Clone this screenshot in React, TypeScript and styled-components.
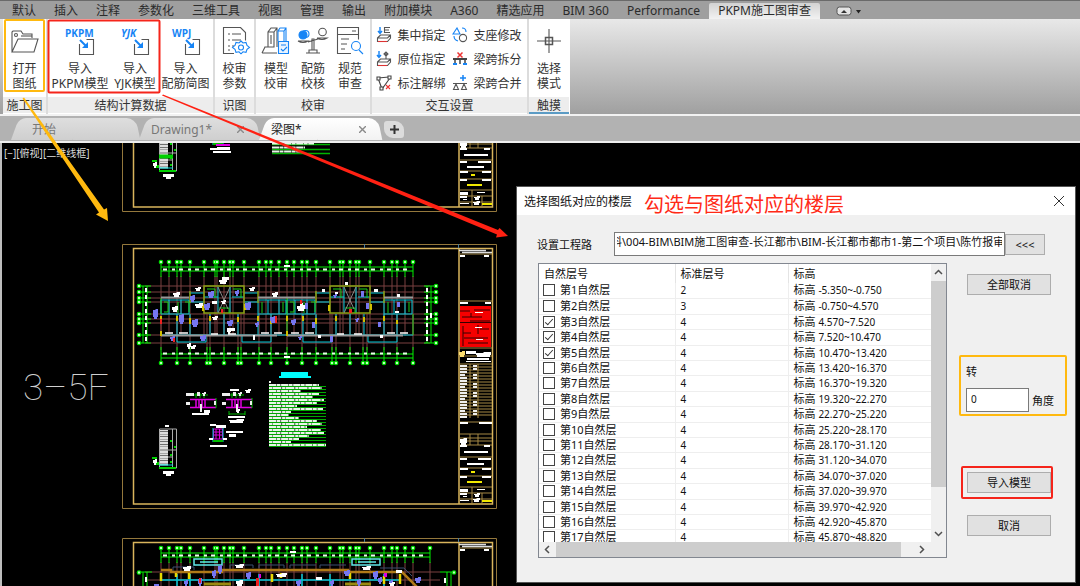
import React from 'react';
import styled, { createGlobalStyle, css } from 'styled-components';

const GlobalStyle = createGlobalStyle`
  *, *::before, *::after { box-sizing: border-box; }
  body { margin: 0; background: #000; }
  button, input { font: inherit; color: inherit; margin: 0; padding: 0; }
  button { border: 0; background: none; }
`;

const Page = styled.div`
  position: relative;
  display: flex;
  flex-direction: column;
  min-height: 100vh;
  overflow: hidden;
  font: 12px/15px 'Noto Sans', 'Noto Sans CJK SC', sans-serif;
  color: #333;
`;

/* ---------- ribbon tabs ---------- */
const MenuBar = styled.nav`
  display: flex;
  align-items: flex-end;
  height: 19px;
  padding-left: 3px;
  background: #9f9f9f;
  border-top: 1px solid #6a6a6a;
  white-space: nowrap;
`;
const MenuTab = styled.button<{ $active?: boolean }>`
  height: 16px;
  padding: 0 9px;
  line-height: 16px;
  color: #2b2b2b;
  ${p => p.$active && css`
    background: linear-gradient(#d2d2d2, #f2f2f2);
    border-radius: 2px 2px 0 0;
  `}
`;
const MenuToggle = styled.button`
  display: flex;
  align-items: center;
  height: 17px;
  margin-left: 16px;
`;

/* ---------- ribbon panels ---------- */
const Ribbon = styled.div`
  display: flex;
  height: 97px;
  padding-left: 3px;
  background: linear-gradient(#e8e8e8, #a0a0a0);
  border-bottom: 2px solid #f2f2f2;
`;
const Panel = styled.section<{ $w: number }>`
  display: flex;
  flex-direction: column;
  flex: none;
  width: ${p => p.$w}px;
  background: #fff;
  border-right: 2px solid #dcdcdc;
  &:last-child { border-right: 1px solid #fff; }
`;
const PanelBody = styled.div`
  display: flex;
  flex: 1;
  justify-content: center;
  padding-top: 8px;
`;
const PanelLabel = styled.div<{ $active?: boolean }>`
  height: 17px;
  line-height: 17px;
  text-align: center;
  background: #ededed;
  border-bottom: ${p => (p.$active ? '2px solid #5b9bc4' : '1px solid #fff')};
`;
const BigTool = styled.button<{ $w: number }>`
  display: flex;
  flex-direction: column;
  align-items: center;
  flex: none;
  width: ${p => p.$w}px;
  height: 66px;
  white-space: nowrap;
  svg { flex: none; margin-bottom: 4px; }
`;
const SmallTools = styled.div`
  display: grid;
  grid-template-columns: 76px 72px;
  grid-auto-rows: 24px;
  margin-top: -4px;
`;
const SmallTool = styled.button`
  display: flex;
  align-items: center;
  gap: 6px;
  white-space: nowrap;
`;

/* ---------- document tabs ---------- */
const DocTabs = styled.div`
  display: flex;
  align-items: flex-end;
  height: 27px;
  padding: 0 0 1px 14px;
  background: #b2b2b2;
  border-bottom: 2px solid #eee;
`;
const DocTab = styled.div<{ $w: number; $active?: boolean }>`
  position: relative;
  z-index: 0;
  display: flex;
  align-items: center;
  justify-content: space-between;
  flex: none;
  width: ${p => p.$w}px;
  height: 22px;
  margin-right: 4px;
  padding: 0 14px 0 9px;
  color: ${p => (p.$active ? '#222' : '#777')};
  &:first-child { padding-left: 18px; }
  &::before, &::after {
    content: '';
    position: absolute;
    z-index: -1;
    top: 0;
    bottom: 0;
    background: ${p => (p.$active ? 'linear-gradient(#fff, #f2f2f2)' : 'linear-gradient(#dedede, #cfcfcf)')};
  }
  &::before { left: 1px; right: 50%; transform: skewX(-20deg); border-radius: 7px 0 0 0; }
  &::after { right: 0; left: 45%; transform: skewX(12deg); border-radius: 0 9px 0 0; }
`;
const DocTitle = styled.button`
  white-space: nowrap;
`;
const DocClose = styled.button`
  display: flex;
  color: #8a8a8a;
`;
const NewTab = styled.button`
  display: flex;
  align-items: center;
  justify-content: center;
  width: 20px;
  height: 17px;
  margin-bottom: 2px;
  background: #dcdcdc;
  border-radius: 3px 9px 3px 9px;
`;

/* ---------- drawing area ---------- */
const Canvas = styled.main`
  position: relative;
  flex: 1;
  background: #000;
  border-left: 2px solid #bdbdbd;
  overflow: hidden;
`;
const Drawing = styled.svg`
  display: block;
`;
const Annotations = styled.svg`
  position: absolute;
  left: 0;
  top: 0;
  pointer-events: none;
`;

/* ---------- dialog ---------- */
const Dialog = styled.section`
  position: absolute;
  top: 43px;
  right: 4px;
  width: 560px;
  height: 397px;
  background: #f0f0f0;
  border: 1px solid #555;
  color: #111;
  font-size: 11px;
`;
const TitleBar = styled.header`
  display: flex;
  align-items: center;
  height: 28px;
  padding: 0 11px 0 7px;
  background: #fff;
`;
const DialogTitle = styled.h1`
  margin: 0;
  font-size: 12px;
  font-weight: 400;
`;
const Callout = styled.span`
  flex: 1;
  padding: 7px 0 0 12px;
  font-size: 20px;
  line-height: 24px;
  color: #ff2a17;
`;
const CloseButton = styled.button`
  display: flex;
`;
const PathRow = styled.div`
  display: flex;
  align-items: center;
  padding: 17px 0 0 20px;
  label { width: 77px; }
`;
const TextBox = styled.input`
  height: 24px;
  background: #fff;
  border: 1px solid #7a7a7a;
  border-radius: 0;
  outline: 0;
`;
const PathInput = styled(TextBox)`
  width: 391px;
  padding: 0 2px 6px;
  text-indent: -6px;
`;
const AngleInput = styled(TextBox)`
  width: 63px;
  padding: 0 4px 2px;
  font-size: 10px;
`;
const PushButton = styled.button<{ $w: number }>`
  display: block;
  width: ${p => p.$w}px;
  height: 21px;
  line-height: 19px;
  background: #e1e1e1;
  border: 1px solid #adadad;
`;
const DialogBody = styled.div`
  display: flex;
  gap: 12px;
  padding: 7px 0 0 21px;
`;
const ListBox = styled.div`
  display: grid;
  grid-template: 278px 15px / 1fr 15px;
  flex: none;
  width: 409px;
  border: 1px solid #828790;
  background: #fff;
`;
const ListView = styled.div`
  overflow: hidden;
`;
const FloorTable = styled.table`
  width: 100%;
  border-collapse: collapse;
  table-layout: fixed;
  line-height: 14px;
  th, td {
    padding: 0 0 0 5px;
    text-align: left;
    font-weight: 400;
    white-space: nowrap;
    border-right: 1px solid #eee;
  }
  th { height: 19px; border-color: #e4e4e4; }
  td { border-bottom: 1px solid #eee; }
  th:last-child, td:last-child { border-right: 0; }
  td:first-child { padding-left: 4px; }
  tbody tr { height: 15px; }
  tbody tr:nth-child(5n + 2), tbody tr:nth-child(5n + 4) { height: 16px; }
`;
const Num = styled.span`
  font-size: 10px;
`;
const FloorLabel = styled.label`
  display: flex;
  align-items: center;
  gap: 5px;
`;
const Check = styled.input`
  appearance: none;
  position: relative;
  width: 12px;
  height: 12px;
  background: #fff;
  border: 1px solid #444;
  &:checked::after {
    content: '';
    position: absolute;
    left: 3px;
    top: 0;
    width: 4px;
    height: 8px;
    border: solid #333;
    border-width: 0 1px 1px 0;
    transform: rotate(42deg);
  }
`;
const VScroll = styled.div`
  display: grid;
  grid-template-rows: 17px 206px 1fr 17px;
  justify-items: center;
  align-items: center;
  background: #f0f0f0;
`;
const HScroll = styled.div`
  display: grid;
  grid-column: 1 / 3;
  grid-template-columns: 17px 345px 1fr 17px;
  align-items: center;
  justify-items: center;
  padding-right: 16px;
  background: #f0f0f0;
`;
const Thumb = styled.div`
  width: 100%;
  height: 100%;
  background: #cdcdcd;
`;
const Side = styled.div`
  display: flex;
  flex-direction: column;
  width: 108px;
  padding-top: 11px;
`;
const SideSlot = styled.div<{ $top: number }>`
  margin-top: ${p => p.$top}px;
  padding-left: 8px;
`;
const AngleBox = styled.div`
  margin-top: 60px;
  height: 61px;
  padding: 7px 0 0 5px;
  border: 2px solid #ffb90f;
  border-radius: 2px;
`;
const AngleRow = styled.div`
  display: flex;
  align-items: center;
  gap: 3px;
  margin-top: 9px;
`;
const ImportBox = styled.div`
  margin: 50px 0 0 2px;
  width: 92px;
  height: 33px;
  padding: 4px 0 0 4px;
  border: 2px solid #f5251b;
  border-radius: 2px;
`;

/* ---------- icons ---------- */
const Glyph = ({ w, h, children }: { w: number; h: number; children: React.ReactNode }) => (
  <svg width={w} height={h} viewBox={`0 0 ${w} ${h}`} fill="none" stroke="#555" strokeWidth="1.1" aria-hidden="true">
    {children}
  </svg>
);
const BLUE = '#1684f5';

const FolderIcon = () => (
  <Glyph w={32} h={30}>
    <path d="M3 25V5l1-1h8l2 3h9v4M3 25l6-13h20l-4 13H3Z" />
    <circle cx="7" cy="8" r="1.500" />
    <path d="M12 9h11" />
  </Glyph>
);
const ImportIcon = ({ name }: { name: string }) => (
  <Glyph w={32} h={30}>
    <text x={name.length > 3 ? 1 : 2} y="10" fill={BLUE} stroke="none" fontSize="10" fontWeight="700" fontStyle={name === 'YJK' ? 'italic' : 'normal'} fontFamily="'Open Sans', sans-serif">{name}</text>
    <path d="M15.500 17v10.500h14V12.500h-7" />
    <path d="M16 13l6 6" stroke={BLUE} strokeWidth="2" />
    <path d="M24 21h-6l6-6z" fill={BLUE} stroke="none" />
  </Glyph>
);
const ParamsIcon = () => (
  <Glyph w={32} h={30}>
    <path d="M15 26.500H4.500V.500h17l5 5v8M9 7h2m2 0h9M9 13h2m2 0h9M9 19h2m2 0h2M9 23h2" />
    <g stroke={BLUE}>
      <path d="m22 14 2 2 3-.6 1 3 2.500 2-2.500 2-1 3-3-.6-2 2-2-2-3 .6-1-3-2.500-2 2.500-2 1-3 3 .6z" />
      <circle cx="22" cy="20.500" r="2.500" />
    </g>
  </Glyph>
);
const ModelIcon = () => (
  <Glyph w={32} h={30}>
    <path d="M2 26h15M2 26l3-6h3V5l3-4h6v19M8 5h6v15H5M14 5l3-4M11 8v9M5 20l-3 6" />
    <path d="M18 14V4l2-3h6v13M18 4h6l2-3M24 4v10" stroke={BLUE} />
    <path d="M18.500 14.500h10v12h-10zM21 18h5m-5 4 2 2 4-4" stroke={BLUE} fill="#e8f3ff" />
  </Glyph>
);
const BalanceIcon = () => (
  <Glyph w={32} h={30}>
    <circle cx="6" cy="8" r="4" fill={BLUE} stroke={BLUE} />
    <circle cx="8.500" cy="7" r="3.500" stroke={BLUE} />
    <circle cx="25.500" cy="5" r="3.800" />
    <path d="M1 14q5 3 10 0H1M20 11q5 3 10 0H20M11 15l10-3M15 12h2v11h-2zM12 23h8v3h-8zM9 26h14" />
  </Glyph>
);
const SpecIcon = () => (
  <Glyph w={32} h={30}>
    <path d="M17 26.500H3.500V.500h21v12M3.500 7.500h21M18 4h4M7 12h8M7 17h6M7 22h4" />
    <circle cx="22" cy="19" r="4.500" stroke={BLUE} />
    <path d="m25 23 4 4" stroke={BLUE} />
  </Glyph>
);
const TargetIcon = () => (
  <Glyph w={32} h={30}>
    <path d="M16 2v24M4 14h24" />
    <path d="M12.500 10.500h7v7h-7z" strokeWidth="1.500" />
  </Glyph>
);
const smallIcons: Record<string, React.ReactNode> = {
  集中指定: <><path d="M1.500 11l3-3h10v3l-3 3.500h-10zM1.500 11h10l3-3" stroke="#555" /><path d="M2 14.500h9" stroke="#d33" /><path d="M4 0v6M2 4l2 2.500L6 4" stroke={BLUE} strokeWidth="1.400" /><path d="M8.500 0v6M9 .500h5M9 3h4M9 5.500h5" /></>,
  支座修改: <><path d="M5 1l3 6H1z" stroke={BLUE} /><circle cx="11" cy="11" r="3.600" /><path d="M10 1q4 0 4 4M2 9q0 4 4 5" stroke={BLUE} /></>,
  原位指定: <><path d="M1.500 11l3-3h10v3l-3 3.500h-10zM1.500 11h10l3-3" stroke="#555" /><path d="M2 14.500h9" stroke="#d33" /><path d="M3 0v6M1 4l2 2.500L5 4" stroke={BLUE} strokeWidth="1.400" /><path d="M10 8V1M8 3l2-2 2 2-2 2z" /></>,
  梁跨拆分: <><path d="M1 8h14" stroke="#444" strokeWidth="2" /><path d="M3 8v4M13 8v4M8 8v5" stroke="#444" strokeWidth="1.500" /><path d="M5.500 1.500l5 5M10.500 1.500l-5 5" stroke="#e33" strokeWidth="1.500" /><path d="M1 13h4M11 13h4" stroke={BLUE} strokeWidth="2" /></>,
  标注解绑: <><path d="M2 3l11-1M2 3l4 11L14 3" stroke="#444" /><path d="M1 2h3v3H1zM12 1h3v3h-3zM4 12h3v3H4z" fill="#fff" stroke="#444" /><path d="M10 10l4 4M14 10l-4 4" stroke="#e33" /></>,
  梁跨合并: <><path d="M1 8.500h14M4 9l-2.500 5.500h5zM12 9l-2.500 5.500h5z" /><path d="M11 0v6M8 3h6" stroke={BLUE} strokeWidth="1.500" /></>,
};
const Chevron = ({ d }: { d: string }) => (
  <svg width="9" height="9" viewBox="0 0 9 9" fill="none" stroke="#505050" strokeWidth="1.500" aria-hidden="true"><path d={d} /></svg>
);
const Cross = ({ size, color = 'currentColor', width = 1 }: { size: number; color?: string; width?: number }) => (
  <svg width={size} height={size} viewBox="0 0 10 10" stroke={color} strokeWidth={width} aria-hidden="true"><path d="M0 0l10 10M10 0L0 10" /></svg>
);

/* ---------- CAD drawing ---------- */
const GREEN = '#00f000';
const CYAN = '#00c8d8';
const BROWN = '#7a4040';
const GRID_TOP = [161, 169, 177, 181, 190, 204, 215, 217, 224, 230, 233, 244, 259, 266, 271, 279, 287, 294, 302, 307, 316, 330, 340, 343, 350, 356, 359, 370, 384, 392, 397, 405, 413];
const GRID_BOTTOM = [161, 177, 190, 207, 210, 224, 238, 241, 259, 271, 287, 302, 316, 332, 336, 350, 363, 367, 384, 397, 413];
const GRID_SIDE = [286, 292, 298, 302, 314, 319, 323, 335, 343];

const vlines = (xs: number[], y1: number, y2: number) => xs.map(x => `M${x} ${y1}V${y2}`).join('');
const hlines = (ys: number[], x1: number, x2: number) => ys.map(y => `M${x1} ${y}H${x2}`).join('');

const Bubble = ({ x, y }: { x: number; y: number }) => (
  <g><circle cx={x} cy={y} r="2.300" fill="#0d0" /><rect x={x - 1} y={y - 1} width="2" height="2" fill="#bfb" /></g>
);

type Blob = [number, number, number, number];
/* each annotation mark is a solid strip with a narrower ragged one beneath it */
const Blobs = ({ items, fill }: { items: Blob[]; fill: string }) => (
  <g fill={fill}>
    {items.map(([x, y, w, h], i) => (h > 3 && w > 3
      ? <path key={i} d={`M${x} ${y + 1}h${w / 2}v-1h${w / 2}v${h - 2}h-1v2h-${w - 2}v-2h-1z`} />
      : <rect key={i} x={x} y={y} width={w} height={h} />))}
  </g>
);

const HousingUnit = ({ x }: { x: number }) => (
  <g transform={`translate(${x} 0)`} fill="none">
    <path d="M0 300H28V314H0zM28 293H43M29 302H43M83 293H97M83 302H97M97 300H125V314H97zM8 300V314M20 300V314M107 300V314M118 300V314M57 287V312M69 287V313M43 297H57M71 297H83" stroke={CYAN} />
    <path d="M16 314V335M29 314V335M49 314V335M63 314V335M77 314V335M97 314V335M110 314V335M16 335V342H45V335M81 335V342H110V335M0 335H126" stroke={CYAN} />
    <path d="M43 286H83V313H43zM29 291V303M97 291V303" stroke="#86a010" strokeWidth="1.500" />
    <path d="M0 298V314M3 302h4v10H3M17 302v11M24 302h4v10M101 302v11M122 302v10M46 289h8v9M72 289h8v9M58 308h10v5M126 314V335" stroke="#18d018" />
    <path d="M0 297.500H28M97 297.500H126M0 335.500H116" stroke="#999" strokeWidth="2" />
    <path d="M57 313L69 287M57 287l10 22" stroke="#888" />
    <path d="M0 316v5M16 316v5M29 318v6M49 316v5M77 317v5M97 316v5M110 320v4M0 336v-5M42 305v6M84 304v6" stroke="#d0c000" strokeWidth="2" />
    <path d="M4 333h8M18 333h9M50 334h7M67 334h8M100 333h8M113 333h8" stroke="#fff" strokeWidth="1.500" />
  </g>
);

const FloorPlan = () => (
  <g>
    <path d={vlines(GRID_TOP, 276, 336) + vlines(GRID_BOTTOM, 314, 350) + hlines(GRID_SIDE, 145, 430)} stroke={BROWN} />
    <path d={vlines(GRID_TOP, 263, 277) + vlines(GRID_BOTTOM, 347, 362) + hlines([267, 271, 354, 358], 161, 413) + hlines(GRID_SIDE, 140, 151) + hlines(GRID_SIDE, 424, 436) + vlines([143, 147, 427, 431], 286, 343)} stroke={GREEN} />
    <path d="M163 269.500H412M163 353.500H412" stroke="#e8ffe8" strokeWidth="2" strokeDasharray="4 5 3 4" />
    <path d="M146 288V342M427 288V342" stroke="#fff" strokeWidth="2" strokeDasharray="4 3" />
    <Blobs fill="#fff" items={[[284, 265, 6, 2], [284, 356, 6, 2], [430, 313, 2, 5]]} />
    {GRID_TOP.map(x => <Bubble key={x} x={x} y={262} />)}
    {GRID_BOTTOM.map(x => <Bubble key={x} x={x} y={363} />)}
    {GRID_SIDE.map(y => <g key={y}><Bubble x={139} y={y} /><Bubble x={436} y={y} /></g>)}
    <HousingUnit x={161} />
    <HousingUnit x={287} />
    <Blobs fill="#7676f0" items={[[153, 309, 5, 10], [179, 314, 5, 10], [192, 319, 6, 8], [204, 303, 6, 7], [190, 295, 5, 7], [208, 291, 6, 7], [235, 290, 4, 6], [245, 302, 6, 8], [200, 335, 6, 6], [227, 320, 6, 6], [270, 316, 7, 7], [291, 319, 5, 6], [255, 322, 4, 5], [170, 336, 5, 5], [298, 336, 4, 4], [312, 322, 3, 6], [330, 336, 3, 6], [355, 318, 4, 4], [378, 322, 3, 5], [366, 303, 3, 6], [333, 294, 4, 4], [361, 291, 3, 6], [397, 302, 3, 5], [305, 303, 3, 6]]} />
    <Blobs fill="#fff" items={[[219, 279, 8, 5], [222, 277, 7, 3], [173, 292, 7, 5], [195, 287, 6, 4], [249, 287, 6, 4], [172, 306, 6, 6], [195, 303, 8, 5], [212, 316, 6, 4], [227, 328, 8, 3], [227, 330, 4, 4], [187, 343, 4, 6], [190, 345, 6, 4], [272, 292, 6, 5], [297, 305, 8, 6], [221, 300, 5, 4], [212, 301, 5, 3], [253, 335, 2, 5], [345, 282, 3, 3], [322, 289, 3, 3], [374, 289, 4, 3], [335, 292, 3, 2], [397, 294, 3, 3], [395, 311, 4, 2], [318, 335, 3, 3], [380, 335, 3, 3], [300, 303, 3, 4]]} />
    <Blobs fill="#f02020" items={[[160, 319, 2, 5], [275, 316, 2, 7], [173, 338, 2, 4], [221, 309, 2, 4], [349, 309, 3, 4], [300, 300, 2, 4]]} />
  </g>
);

const ROOF_GRID = [...GRID_TOP, 430];
const RoofPlan = () => (
  <g>
    <path d={vlines(ROOF_GRID, 562, 586) + hlines([572, 580], 145, 440)} stroke={BROWN} />
    <path d={vlines(ROOF_GRID, 549, 563) + hlines([553, 557], 161, 430) + 'M140 572H152M143 572V586M147 572V586M440 572H454M447 572V586M451 572V586'} stroke={GREEN} />
    <path d="M163 555.500H428" stroke="#e8ffe8" strokeWidth="2" strokeDasharray="4 5 3 4" />
    <path d="M146 577V582M445 578V583" stroke="#fff" strokeWidth="2" />
    {ROOF_GRID.map(x => <Bubble key={x} x={x} y={548} />)}
    <Bubble x={139} y={572.5} />
    <Bubble x={454} y={572.5} />
    <path d="M173 571V567H194V570M230 570V565H253V568M259 568V565H284V568M290 568V565H316M320 568V565H346M380 568H404L412 576" stroke="#3b4f70" fill="none" />
    <path d="M161 570H171V572H222V570H348V572H402L420 590" stroke="#b07a18" strokeWidth="2.500" fill="none" />
    <path d="M161 580H400M177 574V586M190 574V586M259 574V586M302 574V586M330 574V586M384 574V586" stroke={CYAN} strokeWidth="1.500" />
    <path d="M194 559H222V565H194zM352 559H380V565H352zM200 562H218M358 562H376" stroke="#5fe8e8" fill="none" strokeWidth="1.500" />
    <path d="M204 584H231M345 584H371" stroke="#9a8a10" strokeWidth="3" />
    <path d="M161 573v8M189 573v6M272 574v8M281 573v5M350 573v6M384 576v8M400 574v10M176 573v4" stroke="#e8d800" strokeWidth="2.500" />
    <Blobs fill="#7676f0" items={[[212, 570, 4, 8], [218, 565, 4, 9], [198, 578, 4, 8], [246, 572, 5, 7], [184, 580, 4, 6], [154, 584, 5, 2], [344, 570, 6, 6], [373, 571, 5, 8], [378, 577, 4, 7], [357, 579, 4, 7], [389, 580, 4, 6], [415, 577, 6, 6], [330, 580, 4, 6], [296, 580, 5, 6]]} />
    <Blobs fill="#fff" items={[[183, 566, 8, 5], [235, 564, 9, 4], [276, 573, 11, 4], [236, 580, 7, 6], [362, 566, 9, 4], [396, 570, 6, 3], [389, 582, 6, 4], [290, 551, 6, 2], [316, 577, 6, 3]]} />
    <Blobs fill="#f02020" items={[[256, 578, 3, 8], [199, 578, 2, 5]]} />
    <Blobs fill="#e000e0" items={[[259, 574, 2, 4], [384, 573, 3, 4]]} />
  </g>
);

const NOTE_LENGTHS = [2, 50, 53, 32, 50, 44, 55, 48, 28, 54, 22, 20, 30, 48, 53, 38, 52, 55, 40, 30, 22, 57];
const Notes = () => (
  <g>
    <rect x="281" y="372" width="27" height="4" fill="#0ff" />
    <rect x="279" y="376" width="32" height="2" fill="#0ff" />
    {NOTE_LENGTHS.map((w, i) => (
      <g key={i}>
        {i > 0 && <path d={`M269 ${383.5 + i * 3}H326`} stroke="#00a800" />}
        <path d={`M269 ${382 + i * 3}h${w}`} stroke="#e8f4e8" strokeWidth="2" strokeDasharray={i % 2 ? '7 .5 4 .6' : '3 .4 9 .7'} />
      </g>
    ))}
  </g>
);

const SectionDetail = ({ x }: { x: number }) => (
  <g transform={`translate(${x} 0)`}>
    <path d="M0 399.500h26M0 407.500h26M6 399v8M9 399v8M12 399v8M15 399v8" stroke="#e000e0" strokeWidth="1.500" />
    <path d="M6 393v5M10 393v5M14 393v5M26 398v10M4 395h14" stroke="#0b0" />
    <Blobs fill="#eee" items={[[-4, 393, 8, 3], [7, 392, 3, 4], [12, 392, 4, 4], [-4, 402, 4, 3], [24, 401, 2, 4], [10, 404, 2, 8]]} />
  </g>
);

const Details = () => (
  <g>
    <SectionDetail x={190} />
    <SectionDetail x={226} />
    <Blobs fill="#fff" items={[[204, 410, 6, 3], [192, 413, 17, 2], [230, 389, 9, 2], [245, 389, 6, 4], [236, 409, 4, 4], [228, 416, 17, 2], [229, 419, 15, 4]]} />
    <path d="M229 411v4M245 411v4M229 414h16" stroke="#0b0" />
    <path d="M213.500 429h9v10h-9zM216 429v10M219.500 429v10M213 432h9M213 435h9" stroke="#e000e0" fill="none" />
    <path d="M213 428v14M223 428v14" stroke={CYAN} />
    <path d="M213 441h10" stroke="#0b0" strokeWidth="2" />
    <Blobs fill="#fff" items={[[210, 424, 6, 2], [216, 425, 10, 3], [209, 438, 4, 2], [223, 438, 4, 2], [210, 445, 17, 2], [226, 431, 17, 2], [229, 434, 7, 3]]} />
    <path d="M163.500 430V466" stroke="#ddd" strokeWidth="9" strokeDasharray="1.500 .4 2.600 .3" />
    <path d="M159.500 429H176.500V468H159.500zM172.500 429V468M168 450H176M168 457H172" stroke="#aaa" fill="none" />
    <path d="M159 465H173" stroke="#0dd" />
    <Blobs fill="#00d000" items={[[159, 467, 17, 2], [170, 440, 2, 2], [174, 446, 2, 2], [170, 454, 2, 2], [170, 461, 2, 2], [152, 457, 5, 2], [156, 462, 3, 3]]} />
    <Blobs fill="#fff" items={[[165, 425, 4, 2], [153, 459, 4, 6], [163, 471, 11, 3], [166, 473, 5, 3]]} />
  </g>
);

const UpperSheetExtras = () => (
  <g>
    <path d="M272 144.500H330M272 149.500H330M272 153.500H330" stroke="#00b400" strokeWidth="1.500" />
    <path d="M272 143.500h42M272 147.500h33M272 151.500h28" stroke="#e8f4e8" strokeWidth="2" strokeDasharray="7 .5 4 .6" />
    <path d="M216 145h14" stroke="#e000e0" strokeWidth="2" />
    <Blobs fill="#fff" items={[[217, 147, 13, 3], [213, 151, 18, 2]]} />
    <path d="M159 156.500H173" stroke="#00d000" strokeWidth="4" />
  </g>
);

const TITLE_LINES = [254, 301, 348, 356, 422, 434, 438, 441, 445, 457, 468, 476, 487, 493, 499];
const SCHEDULE_LINES = Array.from({ length: 18 }, (_, i) => 364 + i * 3);
const TitleBlock = () => (
  <g>
    <path d={hlines([...TITLE_LINES, ...SCHEDULE_LINES], 459, 492) + 'M470 364V418M478 364V418M470 434V445M478 434V445M472 487V504M482 493V504'} stroke="#a58845" />
    <path d="M459 250.500H486M462 252.500H492" stroke="#ddd" strokeWidth="1.500" />
    <rect x="460" y="306" width="31" height="41" fill="#f50000" />
    <path d="M460 311h10M474 310h16M462 317h20M470 321h20M460 322.500h31M463 326v20M478 325v9M463 333h8M480 329h9M464 338h24M468 343h20M471 313v4" stroke="#300" fill="none" />
    <Blobs fill="#ffe070" items={[[459, 351, 6, 6]]} />
    <Blobs fill="#fff" items={[[460, 255, 5, 2], [484, 255, 5, 2], [460, 302, 8, 2], [485, 302, 6, 2], [475, 312, 8, 1], [475, 327, 7, 1], [476, 339, 7, 1], [466, 351, 10, 3], [476, 352, 15, 5], [467, 358, 22, 2], [466, 361, 25, 1], [460, 422, 8, 2], [479, 422, 13, 2], [460, 438, 7, 7], [460, 445, 7, 2], [484, 445, 6, 2], [464, 451, 24, 2], [460, 458, 7, 2], [478, 458, 13, 2], [467, 463, 17, 2], [460, 468, 8, 2], [482, 468, 9, 2], [460, 476, 7, 2], [482, 476, 9, 2], [460, 489, 8, 3], [477, 489, 8, 1], [460, 493, 7, 2], [474, 493, 6, 4], [473, 498, 7, 4], [463, 496, 4, 1], [460, 500, 9, 1]]} />
    <Blobs fill="#eee" items={SCHEDULE_LINES.map((y, i) => [460, y + 1, i % 4 === 3 ? 5 : 7, 2] as Blob)} />
    <Blobs fill="#eee" items={SCHEDULE_LINES.filter((_, i) => i % 3 !== 2).map(y => [473, y + 1, 4, 2] as Blob)} />
    <Blobs fill="#f0e800" items={[[471, 471, 4, 2], [467, 481, 15, 2], [482, 500, 10, 2]]} />
  </g>
);

const Sheet = ({ dy, children }: { dy: number; children?: React.ReactNode }) => (
  <g transform={`translate(0 ${dy})`}>
    <path d="M122.500 244.500H496.500V508.500H122.500z" stroke="#94783c" fill="none" />
    <path d="M133.500 248.500H492.500V504H133.500zM459 248V504" stroke="#d9b55c" strokeWidth="1.500" fill="none" />
    <path d="M364.500 244V248M458.500 244V248" stroke="#4a7a9a" />
    {children}
    <Details />
    <TitleBlock />
  </g>
);

/* ---------- data ---------- */
const menuTabs = ['默认', '插入', '注释', '参数化', '三维工具', '视图', '管理', '输出', '附加模块', 'A360', '精选应用', 'BIM 360', 'Performance'];
const reviewTools = [
  { icon: <ModelIcon />, a: '模型', b: '校审' },
  { icon: <BalanceIcon />, a: '配筋', b: '校核' },
  { icon: <SpecIcon />, a: '规范', b: '审查' },
];
const floors: [string, string][] = [
  ['2', '-5.350~-0.750'], ['3', '-0.750~4.570'], ['4', '4.570~7.520'], ['4', '7.520~10.470'],
  ['4', '10.470~13.420'], ['4', '13.420~16.370'], ['4', '16.370~19.320'], ['4', '19.320~22.270'],
  ['4', '22.270~25.220'], ['4', '25.220~28.170'], ['4', '28.170~31.120'], ['4', '31.120~34.070'],
  ['4', '34.070~37.020'], ['4', '37.020~39.970'], ['4', '39.970~42.920'], ['4', '42.920~45.870'],
  ['4', '45.870~48.820'],
];

const Tool = ({ w, icon, a, b }: { w: number; icon: React.ReactNode; a: string; b: string }) => (
  <BigTool $w={w}>{icon}<span>{a}</span><span>{b}</span></BigTool>
);

const FloorDialog = () => (
  <Dialog role="dialog" aria-labelledby="dialog-title">
    <TitleBar>
      <DialogTitle id="dialog-title">选择图纸对应的楼层</DialogTitle>
      <Callout>勾选与图纸对应的楼层</Callout>
      <CloseButton aria-label="关闭"><Cross size={10} color="#333" /></CloseButton>
    </TitleBar>
    <PathRow>
      <label htmlFor="path">设置工程路</label>
      <PathInput id="path" defaultValue="料\004-BIM\BIM施工图审查-长江都市\BIM-长江都市都市1-第二个项目\陈竹报审" />
      <PushButton $w={40}>&lt;&lt;&lt;</PushButton>
    </PathRow>
    <DialogBody>
      <ListBox>
        <ListView>
          <FloorTable>
            <colgroup><col width="136" /><col width="113" /><col /></colgroup>
            <thead><tr><th>自然层号</th><th>标准层号</th><th>标高</th></tr></thead>
            <tbody>
              {floors.map(([std, range], i) => (
                <tr key={i}>
                  <td><FloorLabel><Check type="checkbox" defaultChecked={i >= 2 && i <= 4} /><span>第{i + 1}自然层</span></FloorLabel></td>
                  <td><Num>{std}</Num></td>
                  <td>标高 <Num>{range}</Num></td>
                </tr>
              ))}
            </tbody>
          </FloorTable>
        </ListView>
        <VScroll>
          <Chevron d="M1 6l3.500-3.500L8 6" />
          <Thumb />
          <span />
          <Chevron d="M1 3l3.500 3.500L8 3" />
        </VScroll>
        <HScroll>
          <Chevron d="M6 1L2.500 4.500 6 8" />
          <Thumb />
          <span />
          <Chevron d="M3 1l3.500 3.500L3 8" />
        </HScroll>
      </ListBox>
      <Side>
        <SideSlot $top={0}><PushButton $w={84}>全部取消</PushButton></SideSlot>
        <AngleBox>
          <label htmlFor="angle">转</label>
          <AngleRow><AngleInput id="angle" defaultValue="0" /><span>角度</span></AngleRow>
        </AngleBox>
        <ImportBox><PushButton $w={84}>导入模型</PushButton></ImportBox>
        <SideSlot $top={16}><PushButton $w={84}>取消</PushButton></SideSlot>
      </Side>
    </DialogBody>
  </Dialog>
);

export default function App() {
  return (
    <Page>
      <GlobalStyle />
      <MenuBar>
        {menuTabs.map(t => <MenuTab key={t}>{t}</MenuTab>)}
        <MenuTab $active>PKPM施工图审查</MenuTab>
        <MenuToggle aria-label="功能区显示">
          <svg width="26" height="10" viewBox="0 0 26 10" aria-hidden="true">
            <rect x="1" y="1" width="14" height="8" rx="2.500" fill="#e4e4e4" stroke="#555" />
            <path d="M5 7l3-3 3 3z" fill="#333" /><path d="M20 4h5l-2.500 3.500z" fill="#222" />
          </svg>
        </MenuToggle>
      </MenuBar>
      <Ribbon>
        <Panel $w={45}>
          <PanelBody><Tool w={42} icon={<FolderIcon />} a="打开" b="图纸" /></PanelBody>
          <PanelLabel>施工图</PanelLabel>
        </Panel>
        <Panel $w={167}>
          <PanelBody>
            <Tool w={60} icon={<ImportIcon name="PKPM" />} a="导入" b="PKPM模型" />
            <Tool w={50} icon={<ImportIcon name="YJK" />} a="导入" b="YJK模型" />
            <Tool w={51} icon={<ImportIcon name="WPJ" />} a="导入" b="配筋简图" />
          </PanelBody>
          <PanelLabel>结构计算数据</PanelLabel>
        </Panel>
        <Panel $w={41}>
          <PanelBody><Tool w={38} icon={<ParamsIcon />} a="校审" b="参数" /></PanelBody>
          <PanelLabel>识图</PanelLabel>
        </Panel>
        <Panel $w={116}>
          <PanelBody>{reviewTools.map(t => <Tool key={t.a} w={37} {...t} />)}</PanelBody>
          <PanelLabel>校审</PanelLabel>
        </Panel>
        <Panel $w={157}>
          <PanelBody>
            <SmallTools>
              {Object.keys(smallIcons).map(name => (
                <SmallTool key={name}><Glyph w={16} h={16}>{smallIcons[name]}</Glyph>{name}</SmallTool>
              ))}
            </SmallTools>
          </PanelBody>
          <PanelLabel>交互设置</PanelLabel>
        </Panel>
        <Panel $w={41}>
          <PanelBody><Tool w={40} icon={<TargetIcon />} a="选择" b="模式" /></PanelBody>
          <PanelLabel $active>触摸</PanelLabel>
        </Panel>
      </Ribbon>
      <DocTabs>
        <DocTab $w={124}><DocTitle>开始</DocTitle></DocTab>
        <DocTab $w={116}><DocTitle>Drawing1*</DocTitle><DocClose aria-label="关闭 Drawing1"><Cross size={7} width={2} /></DocClose></DocTab>
        <DocTab $w={118} $active><DocTitle>梁图*</DocTitle><DocClose aria-label="关闭 梁图"><Cross size={7} width={2} /></DocClose></DocTab>
        <NewTab aria-label="新建"><svg width="9" height="9" viewBox="0 0 9 9" stroke="#333" strokeWidth="2" aria-hidden="true"><path d="M4.500 0v9M0 4.500h9" /></svg></NewTab>
      </DocTabs>
      <Canvas>
        <Drawing width="518" height="443" viewBox="2 143 518 443">
          <Sheet dy={-297} />
          <UpperSheetExtras />
          <Sheet dy={0}><FloorPlan /><Notes /></Sheet>
          <Sheet dy={294} />
          <RoofPlan />
          <text x="4" y="157" fill="#ddd" fontSize="10" fontFamily="'Noto Sans', 'Noto Sans CJK SC', sans-serif">[−][俯视][二维线框]</text>
          <text x="23" y="400" fill="#d0d0d0" fontSize="37" fontWeight="100" fontFamily="Roboto, Lato, sans-serif">3–5F</text>
        </Drawing>
        <FloorDialog />
      </Canvas>
      <Annotations width="520" height="250" viewBox="0 0 520 250" fill="none" aria-hidden="true">
        <rect x="5" y="20" width="39" height="71" rx="1" stroke="#ffb90f" strokeWidth="2" />
        <rect x="48.500" y="20.500" width="111" height="72" rx="1" stroke="#f5251b" strokeWidth="2" />
        <path d="M22.500 98.500L24 97.500L104 209.500L107 208L108 221L96 214.500L99 212.500Z" fill="#ffb90f" />
        <path d="M162 95.500L163 94.500L498 230L499.500 228L508 236L496 237.500L497 234.500Z" fill="#ff2113" />
      </Annotations>
    </Page>
  );
}
